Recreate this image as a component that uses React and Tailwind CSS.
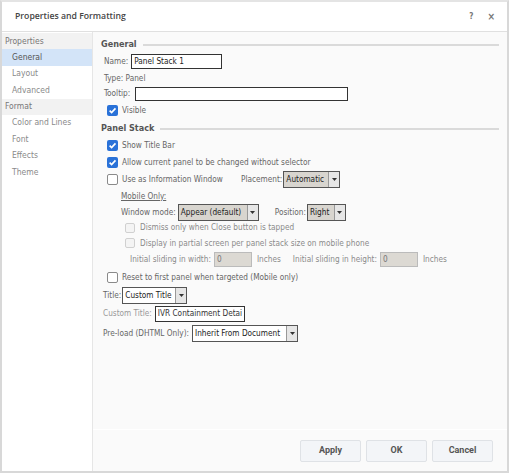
import React from "react";

const font = { fontFamily: '"DejaVu Sans Condensed", "DejaVu Sans", sans-serif', fontStretch: "condensed" };

function Check({ checked, disabled }) {
  if (disabled) {
    return <span className="inline-block w-[10px] h-[10px] rounded-[2px] border border-[#d0d0d0] bg-[#f4f4f4] mr-[5px]" />;
  }
  if (checked) {
    return (
      <span className="inline-flex items-center justify-center w-[11px] h-[11px] rounded-[2px] bg-[#2a72d8] mr-[4px]">
        <svg width="9" height="9" viewBox="0 0 10 10">
          <path d="M1.8 5.2 L4 7.4 L8.3 2.6" stroke="#fff" strokeWidth="1.8" fill="none" />
        </svg>
      </span>
    );
  }
  return <span className="inline-block w-[11px] h-[11px] rounded-[2px] border border-[#8a8a8a] bg-white mr-[4px]" />;
}

function Select({ value, width, gray }) {
  return (
    <span
      className={`inline-flex items-stretch shrink-0 h-[17px] border border-[#555] ${gray ? "bg-[#d8d5cf]" : "bg-white"}`}
      style={{ width }}
    >
      <span className="flex-1 flex items-center pl-[2px] text-[#222] whitespace-nowrap overflow-hidden">{value}</span>
      <span className="w-[11px] flex items-center justify-center border-l border-[#999] bg-[#e6e6e6]">
        <svg width="5" height="3" viewBox="0 0 5 3">
          <path d="M0 0 L5 0 L2.5 3 Z" fill="#333" />
        </svg>
      </span>
    </span>
  );
}

function Header({ children }) {
  return (
    <div className="h-[16px] flex items-center font-bold text-[#555] text-[9px]">
      <span className="mr-[6px]">{children}</span>
      <span className="flex-1 h-[2px] bg-[#dadada]" />
    </div>
  );
}

export default function App() {
  const side = [
    { t: "Properties", h: true },
    { t: "General", sel: true },
    { t: "Layout" },
    { t: "Advanced" },
    { t: "Format", h: true },
    { t: "Color and Lines" },
    { t: "Font" },
    { t: "Effects" },
    { t: "Theme" },
  ];

  return (
    <div className="w-[509px] h-[473px] bg-white border-2 border-[#d8d8d8] border-t-[#e4e4e4] flex flex-col text-[8.2px] text-[#666]" style={font}>
      {/* title bar */}
      <div className="h-[30px] shrink-0 flex items-center border-b border-[#e0e0e0] pl-[13px] pr-[12px]">
        <span className="font-semibold text-[8.7px] text-[#444]" style={{ fontFamily: '"Open Sans", sans-serif', fontStretch: "normal" }}>
          Properties and Formatting
        </span>
        <span className="ml-auto font-bold text-[8px] text-[#777] mr-[14px]">?</span>
        <span className="font-bold text-[10px] text-[#777]">×</span>
      </div>

      <div className="flex flex-1 min-h-0">
        {/* sidebar */}
        <div className="w-[91px] shrink-0 border-r border-[#e6e6e6] pt-[1px] text-[8.5px]">
          {side.map((s) =>
            s.h ? (
              <div key={s.t} className="h-[16px] flex items-center pl-[3px] bg-[#f2f2f2] text-[#777]">
                {s.t}
              </div>
            ) : (
              <div
                key={s.t}
                className={`h-[16.5px] flex items-center pl-[10px] ${s.sel ? "bg-[#d3e4f8] text-[#555]" : "text-[#8a8a8a]"}`}
              >
                {s.t}
              </div>
            )
          )}
        </div>

        {/* content */}
        <div className="flex-1 flex flex-col bg-[#fafafa]">
          <div className="flex-1 pl-[8px] pr-[8px] pt-[5px]">
            <Header>General</Header>
            <div className="h-[17px] flex items-center pl-[3px]">
              <span className="mr-[3px]">Name:</span>
              <span className="w-[91px] h-[15px] border-[1.5px] border-[#333] bg-white flex items-center pl-[2px] text-[#222]">
                Panel Stack 1
              </span>
            </div>
            <div className="h-[16px] flex items-center pl-[3px]">Type: Panel</div>
            <div className="h-[15px] flex items-center pl-[3px]">
              <span className="w-[31px] shrink-0">Tooltip:</span>
              <span className="w-[213px] h-[14px] border-[1.5px] border-[#333] bg-white" />
            </div>
            <div className="h-[18px] flex items-center pl-[6px]">
              <Check checked />
              Visible
            </div>
            <div className="h-[19px] flex items-center">
              <div className="flex-1">
                <Header>Panel Stack</Header>
              </div>
            </div>
            <div className="h-[15px] flex items-center pl-[6px]">
              <Check checked />
              Show Title Bar
            </div>
            <div className="h-[18px] flex items-center pl-[6px]">
              <Check checked />
              Allow current panel to be changed without selector
            </div>
            <div className="h-[17px] flex items-center pl-[6px]">
              <Check />
              <span className="w-[119px]">Use as Information Window</span>
              <span className="mr-[1px]">Placement:</span>
              <Select value="Automatic" width={57} gray />
            </div>
            <div className="h-[16px] flex items-center pl-[20px]">
              <span className="underline">Mobile Only:</span>
            </div>
            <div className="h-[16px] flex items-center pl-[20px]">
              <span className="mr-[2px]">Window mode:</span>
              <Select value="Appear (default)" width={81} gray />
              <span className="ml-[16px] mr-[1px]">Position:</span>
              <Select value="Right" width={39} gray />
            </div>
            <div className="h-[15px] flex items-center pl-[24px] text-[#8a8a8a]">
              <Check disabled />
              Dismiss only when Close button is tapped
            </div>
            <div className="h-[16px] flex items-center pl-[24px] text-[#8a8a8a]">
              <Check disabled />
              Display in partial screen per panel stack size on mobile phone
            </div>
            <div className="h-[17px] flex items-center pl-[29px] text-[#8a8a8a]">
              <span className="mr-[3px]">Initial sliding in width:</span>
              <span className="w-[38px] h-[15px] border border-[#bbb] bg-[#dcd9d3] flex items-center pl-[2px] text-[#777]">0</span>
              <span className="ml-[5px] mr-[12px]">Inches</span>
              <span className="mr-[3px]">Initial sliding in height:</span>
              <span className="w-[38px] h-[15px] border border-[#bbb] bg-[#dcd9d3] flex items-center pl-[2px] text-[#777]">0</span>
              <span className="ml-[5px]">Inches</span>
            </div>
            <div className="h-[18px] flex items-center pl-[6px]">
              <Check />
              Reset to first panel when targeted (Mobile only)
            </div>
            <div className="h-[18px] flex items-center pl-[2px]">
              <span className="mr-[1px]">Title:</span>
              <Select value="Custom Title" width={65} />
            </div>
            <div className="h-[19px] flex items-center pl-[2px] text-[#999]">
              <span className="mr-[3px]">Custom Title:</span>
              <span className="w-[90px] h-[16px] border border-[#333] bg-white flex items-center pl-[2px] text-[#333] whitespace-nowrap overflow-hidden">
                IVR Containment Detai
              </span>
            </div>
            <div className="h-[20px] flex items-center pl-[2px]">
              <span className="mr-[3px]">Pre-load (DHTML Only):</span>
              <Select value="Inherit From Document" width={106} />
            </div>
          </div>

          {/* footer */}
          <div className="h-[42px] shrink-0 border-t border-white flex items-center justify-end gap-[5px] pr-[14px]">
            {["Apply", "OK", "Cancel"].map((b) => (
              <button
                key={b}
                className="w-[61px] h-[22px] border border-[#dfe2e6] bg-[#f3f5f8] rounded-[2px] font-bold text-[9px] text-[#555]"
                style={{ fontFamily: '"Roboto", sans-serif', fontStretch: "normal" }}
              >
                {b}
              </button>
            ))}
          </div>
        </div>
      </div>
    </div>
  );
}
